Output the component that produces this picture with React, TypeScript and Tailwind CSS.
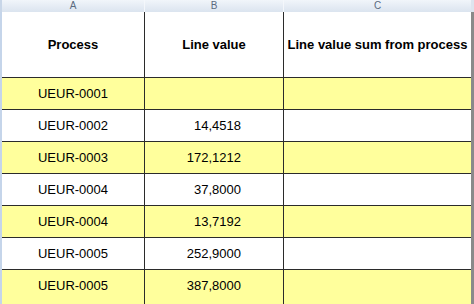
import React from "react";

const rows: { p: string; v: string; y: boolean }[] = [
  { p: "UEUR-0001", v: "", y: true },
  { p: "UEUR-0002", v: "14,4518", y: false },
  { p: "UEUR-0003", v: "172,1212", y: true },
  { p: "UEUR-0004", v: "37,8000", y: false },
  { p: "UEUR-0004", v: "13,7192", y: true },
  { p: "UEUR-0005", v: "252,9000", y: false },
  { p: "UEUR-0005", v: "387,8000", y: true },
];

export default function App() {
  return (
    <div
      className="w-[474px] h-[304px] overflow-hidden bg-white flex flex-col text-black"
      style={{ fontFamily: '"Liberation Sans", Arial, sans-serif' }}
    >
      <div className="h-[12px] flex bg-gradient-to-b from-[#f1f5fa] to-[#dbe4ef] text-[10px] leading-[12px] text-[#5b6b80] shrink-0">
        <div className="w-[2px] bg-[#c8d6e8]" />
        <div className="w-[143px] text-center border-r border-[#f4f7fb]">A</div>
        <div className="w-[139px] text-center border-r border-[#f4f7fb]">B</div>
        <div className="w-[187px] text-center">C</div>
        <div className="w-[3px] bg-[#dde5ef]" />
      </div>
      <div className="flex flex-1 min-h-0">
        <div className="w-[2px] bg-[#c5d5ea]" />
        <div className="grid grid-cols-[143px_139px_187px] grid-rows-[66px_repeat(6,32px)_34px] content-start text-[13px]">
          <div className="border-r border-b border-[#2b2b2b] flex items-center justify-center font-bold">Process</div>
          <div className="border-r border-b border-[#2b2b2b] flex items-center justify-center font-bold">Line value</div>
          <div className="border-b border-[#2b2b2b] flex items-center justify-center font-bold">Line value sum from process</div>
          {rows.map((r, i) => {
            const bg = r.y ? "bg-[#ffff9c]" : "bg-white";
            const last = i === rows.length - 1;
            const bb = last ? "" : "border-b";
            return (
              <React.Fragment key={i}>
                <div className={`${bg} border-r ${bb} border-[#2b2b2b] flex items-center justify-center ${last ? "pb-[2px]" : ""}`}>{r.p}</div>
                <div className={`${bg} border-r ${bb} border-[#2b2b2b] flex items-center justify-end pr-[42px] ${last ? "pb-[2px]" : ""}`}>{r.v}</div>
                <div className={`${bg} ${bb} border-[#2b2b2b]`} />
              </React.Fragment>
            );
          })}
        </div>
        <div className="w-[3px] bg-[#8a8a8a]" />
      </div>
    </div>
  );
}
